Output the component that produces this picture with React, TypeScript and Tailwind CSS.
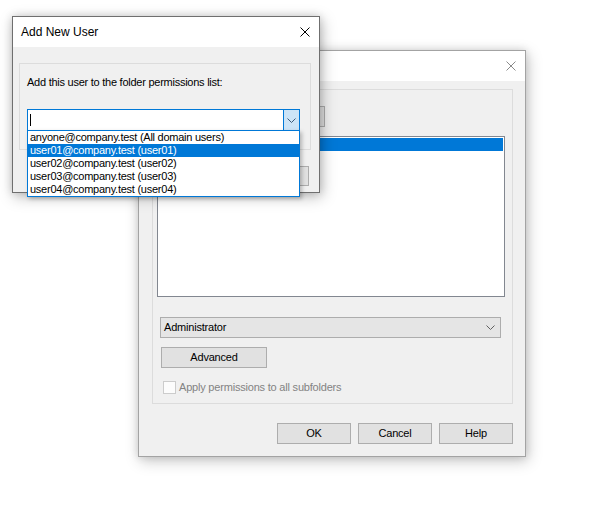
import type { ReactNode } from "react";

const users = [
  "anyone@company.test (All domain users)",
  "user01@company.test (user01)",
  "user02@company.test (user02)",
  "user03@company.test (user03)",
  "user04@company.test (user04)",
];

function CloseIcon({ color }: { color: string }) {
  return (
    <svg width="10" height="10" viewBox="0 0 10 10">
      <path d="M0.5 0.5L9.5 9.5M9.5 0.5L0.5 9.5" stroke={color} strokeWidth="1" />
    </svg>
  );
}

function Chevron({ color }: { color: string }) {
  return (
    <svg width="9" height="5" viewBox="0 0 9 5">
      <path d="M0.5 0.5L4.5 4.5L8.5 0.5" stroke={color} strokeWidth="1" fill="none" />
    </svg>
  );
}

function WinButton({ children, className = "" }: { children?: ReactNode; className?: string }) {
  return (
    <div
      className={`flex items-center justify-center border border-[#adadad] bg-[#e1e1e1] text-[11px] tracking-[-0.2px] text-black ${className}`}
    >
      {children}
    </div>
  );
}

function PermissionsDialog() {
  return (
    <div className="absolute left-[138px] top-[50px] flex h-[407px] w-[388px] flex-col border border-[#a3a3a3] bg-[#f0f0f0] shadow-[0_0_8px_rgba(0,0,0,0.12),2px_4px_14px_rgba(0,0,0,0.22)]">
      {/* Title bar (title text sits behind the front dialog) */}
      <div className="flex h-[30px] items-center justify-end bg-white pr-[9px]">
        <CloseIcon color="#8a8a8a" />
      </div>

      {/* Group */}
      <div className="ml-[13px] mr-[12px] mt-[8px] flex flex-col border border-[#dcdcdc] pb-[9px]">
        <div className="ml-[15px] mt-[16px] flex gap-[7px]">
          <WinButton className="h-[21px] w-[75px]" />
          <WinButton className="h-[21px] w-[75px]" />
        </div>

        <div className="ml-[4px] mt-[9px] h-[161px] w-[348px] border border-[#828790] bg-white px-px pt-px">
          <div className="h-[13px] bg-[#0078d7]" />
        </div>

        <div className="ml-[7px] mt-[20px] flex h-[21px] w-[341px] items-center justify-between border border-[#adadad] bg-[#e5e5e5] pl-[3px] pr-[5px] text-[11px] tracking-[-0.2px] text-black">
          <span>Administrator</span>
          <Chevron color="#606060" />
        </div>

        <WinButton className="ml-[8px] mt-[9px] h-[21px] w-[106px]">Advanced</WinButton>

        <div className="ml-[10px] mt-[13px] flex items-center gap-[3px]">
          <div className="h-[13px] w-[13px] border border-[#cccccc] bg-[#fcfcfc]" />
          <span className="text-[11px] leading-[13px] tracking-[-0.2px] text-[#838383]">
            Apply permissions to all subfolders
          </span>
        </div>
      </div>

      {/* Buttons */}
      <div className="mr-[12px] mt-[19px] flex justify-end gap-[7px]">
        <WinButton className="h-[21px] w-[74px]">OK</WinButton>
        <WinButton className="h-[21px] w-[74px]">Cancel</WinButton>
        <WinButton className="h-[21px] w-[74px]">Help</WinButton>
      </div>
    </div>
  );
}

function AddUserDialog() {
  return (
    <div className="absolute left-[12px] top-[16px] flex h-[177px] w-[308px] flex-col border border-[#6f6f6f] bg-[#f0f0f0] shadow-[0_0_8px_rgba(0,0,0,0.15),2px_4px_14px_rgba(0,0,0,0.25)]">
      {/* Title bar */}
      <div className="flex h-[30px] shrink-0 items-center justify-between bg-white pl-[8px] pr-[9px]">
        <span className="text-[12px] text-black">Add New User</span>
        <CloseIcon color="#000000" />
      </div>

      {/* Group */}
      <div className="ml-[6px] mr-[8px] mt-[16px] flex h-[87px] flex-col border border-[#dcdcdc]">
        <div className="ml-[7px] mt-[12px] text-[11px] leading-[13px] tracking-[-0.25px] text-black">
          Add this user to the folder permissions list:
        </div>

        {/* Combo box */}
        <div className="relative ml-[7px] mt-[20px] flex h-[22px] w-[273px] border border-[#0078d7] bg-white">
          <div className="flex flex-1 items-center pl-[2px]">
            <div className="h-[12px] w-px bg-black" />
          </div>
          <div className="flex w-[16px] items-center justify-center border-l border-[#0078d7] bg-[#cce4f7]">
            <Chevron color="#3c5a78" />
          </div>

          {/* Drop-down list */}
          <div className="absolute left-[-1px] top-[20px] z-10 flex w-[273px] flex-col border border-[#0078d7] bg-white shadow-[2px_2px_4px_rgba(0,0,0,0.25)]">
            {users.map((u, i) => (
              <div
                key={u}
                className={`h-[13px] whitespace-nowrap pl-[2px] text-[11px] leading-[13px] tracking-[-0.25px] ${
                  i === 1 ? "bg-[#0078d7] text-white" : "text-black"
                }`}
              >
                {u}
              </div>
            ))}
          </div>
        </div>
      </div>

      {/* Buttons (covered by the drop-down list) */}
      <div className="mr-[10px] mt-[16px] flex justify-end gap-[7px]">
        <WinButton className="h-[20px] w-[74px]" />
        <WinButton className="h-[20px] w-[74px]" />
      </div>
    </div>
  );
}

export default function App() {
  return (
    <div className="relative h-[519px] w-[603px] overflow-hidden bg-white font-['Liberation_Sans',Arial,sans-serif]">
      <PermissionsDialog />
      <AddUserDialog />
    </div>
  );
}
